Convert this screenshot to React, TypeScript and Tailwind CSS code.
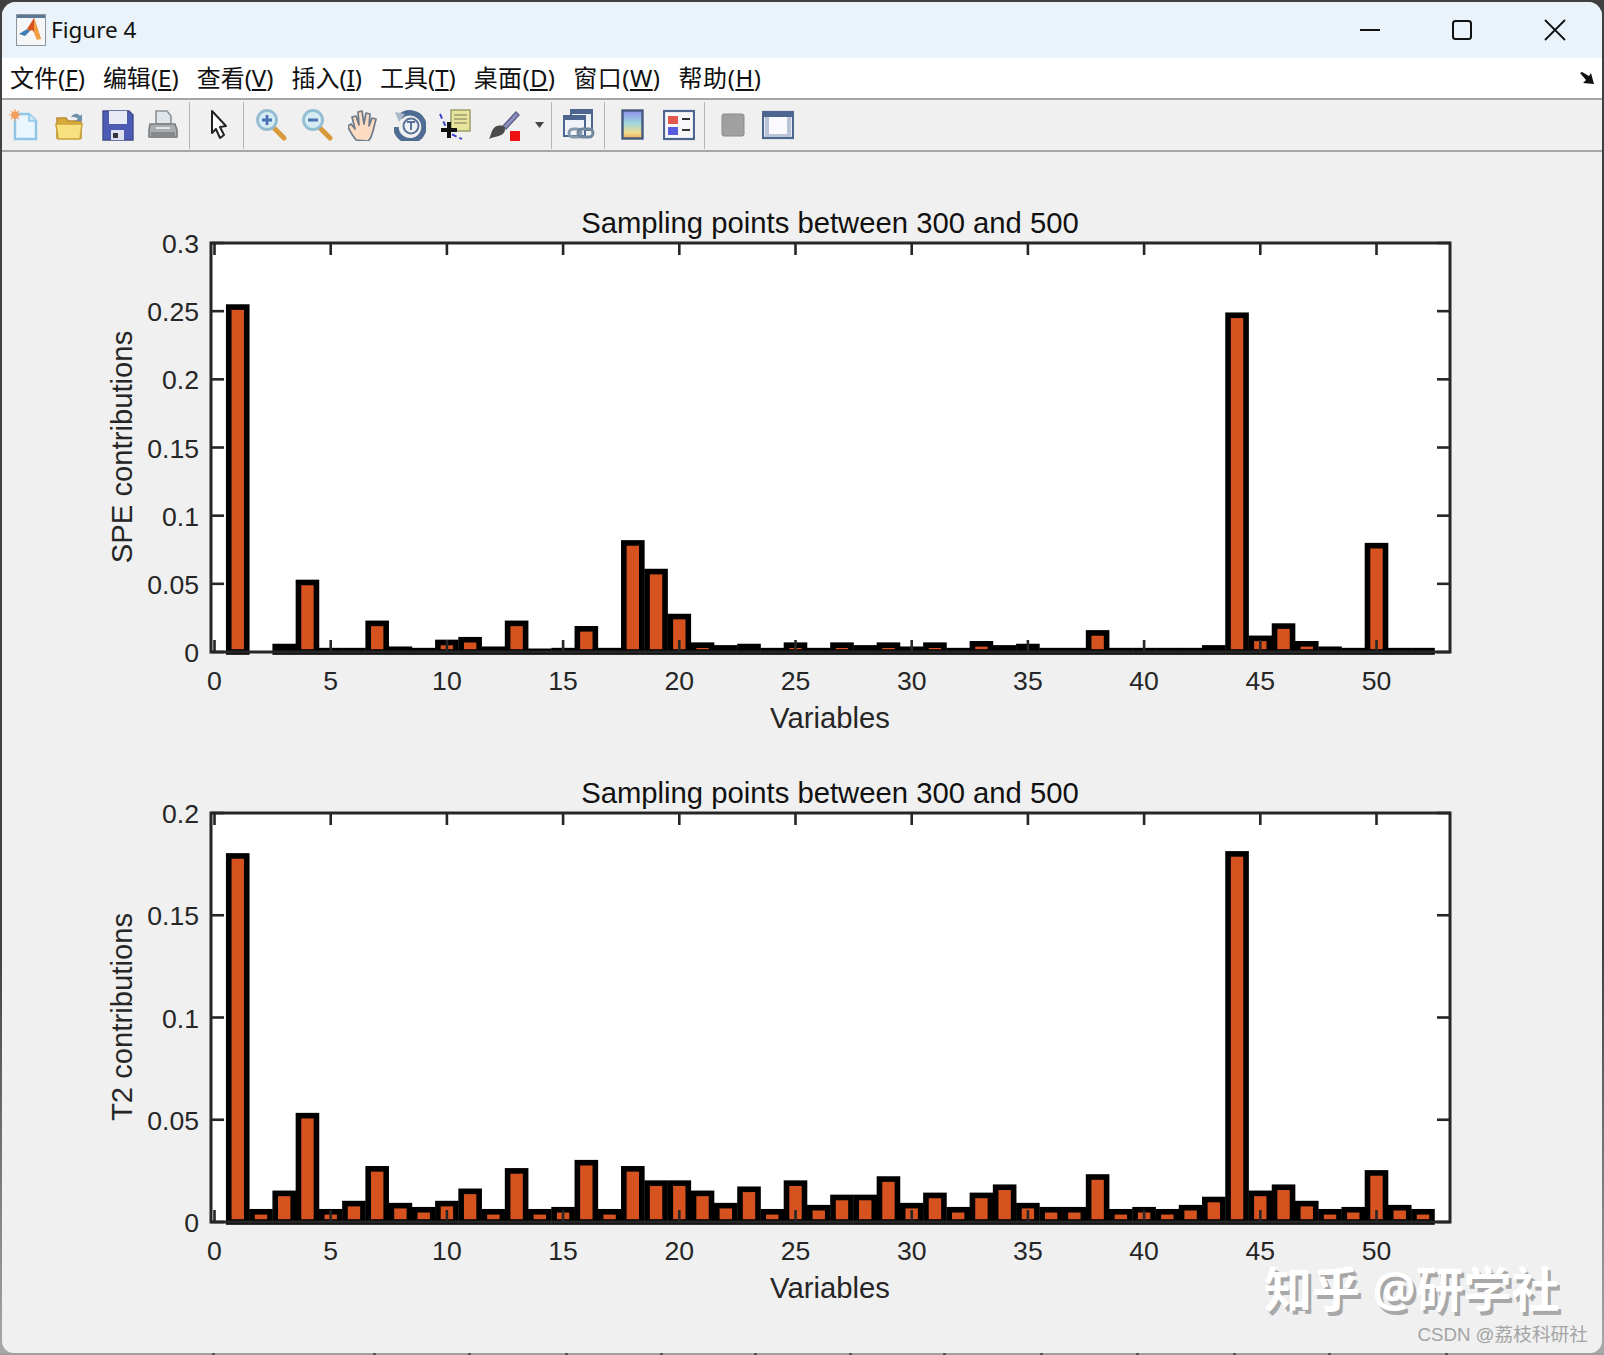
import React from 'react';

const MENUS = [
  { cn: '文件', key: 'F', extra: '' },
  { cn: '编辑', key: 'E', extra: '' },
  { cn: '查看', key: 'V', extra: '' },
  { cn: '插入', key: 'I', extra: '' },
  { cn: '工具', key: 'T', extra: '' },
  { cn: '桌面', key: 'D', extra: 'tracking-[0.3px]' },
  { cn: '窗口', key: 'W', extra: 'tracking-[0.5px]' },
  { cn: '帮助', key: 'H', extra: 'tracking-[0.6px]' },
];

const SPE = [
  0.253, 0, 0.004, 0.051, 0.001, 0.001, 0.021, 0.002, 0.001, 0.007, 0.009, 0.002, 0.021, 0.0005, 0.001, 0.017, 0.001, 0.08,
  0.059, 0.026, 0.005, 0.003, 0.004, 0.001, 0.005, 0.001, 0.005, 0.003, 0.005, 0.002, 0.005, 0.001, 0.006, 0.003, 0.004,
  0.001, 0.001, 0.014, 0.001, 0.001, 0.001, 0.001, 0.003, 0.247, 0.01, 0.019, 0.006, 0.002, 0.001, 0.078, 0.001, 0.001,
];

const T2 = [
  0.179, 0.005, 0.014, 0.052, 0.005, 0.009, 0.026, 0.008, 0.006, 0.009, 0.015, 0.005, 0.025, 0.005, 0.006, 0.029, 0.005,
  0.026, 0.019, 0.019, 0.014, 0.008, 0.016, 0.005, 0.019, 0.007, 0.012, 0.012, 0.021, 0.008, 0.013, 0.006, 0.013, 0.017,
  0.008, 0.006, 0.006, 0.022, 0.005, 0.006, 0.005, 0.007, 0.011, 0.18, 0.014, 0.017, 0.009, 0.005, 0.006, 0.024, 0.007,
  0.005,
];

const AX_LEFT = 209;
const AX_RIGHT = 1448;
const AX_TOP = 43;
const AX_BOTTOM = 452;
const X0 = 212.5;
const DX = 23.24;
const INK = '#262626';

// tops of the window stacked behind this one, showing under the bottom edge
const PEEK_MARKS = [212, 373, 468, 565, 660, 754, 849, 943, 1040, 1136, 1233, 1328, 1445];

function Plot({ data, yMax, yTicks, yLabel }: { data: number[]; yMax: number; yTicks: string[]; yLabel: string }) {
  const toY = (v: number) => AX_BOTTOM - (v / yMax) * (AX_BOTTOM - AX_TOP);
  const xTicks = [0, 5, 10, 15, 20, 25, 30, 35, 40, 45, 50];
  return (
    <svg width="1600" height="540" className="block shrink-0" fontFamily="'Liberation Sans', Arial, sans-serif">
      <rect x={AX_LEFT} y={AX_TOP} width={AX_RIGHT - AX_LEFT} height={AX_BOTTOM - AX_TOP} fill="#fff" />
      {data.map((v, i) => (
        <rect
          key={i}
          x={X0 + (i + 1) * DX - 9}
          y={toY(v)}
          width={18}
          height={AX_BOTTOM - toY(v)}
          fill="#d6531f"
          stroke="#000"
          strokeWidth={5.6}
        />
      ))}
      <rect x={AX_LEFT} y={AX_TOP} width={AX_RIGHT - AX_LEFT} height={AX_BOTTOM - AX_TOP} fill="none" stroke={INK} strokeWidth={3} />
      {xTicks.map((t) => {
        const x = X0 + t * DX;
        return (
          <g key={t}>
            <line x1={x} x2={x} y1={AX_TOP} y2={AX_TOP + 12} stroke={INK} strokeWidth={2.6} />
            <line x1={x} x2={x} y1={AX_BOTTOM} y2={AX_BOTTOM - 12} stroke={INK} strokeWidth={2.6} />
            <text x={x} y={490} fontSize={26.6} fill={INK} textAnchor="middle">
              {t}
            </text>
          </g>
        );
      })}
      {yTicks.map((t, i) => {
        const y = AX_BOTTOM - (i / (yTicks.length - 1)) * (AX_BOTTOM - AX_TOP);
        return (
          <g key={t}>
            <line x1={AX_LEFT} x2={AX_LEFT + 13} y1={y} y2={y} stroke={INK} strokeWidth={2.6} />
            <line x1={AX_RIGHT} x2={AX_RIGHT - 13} y1={y} y2={y} stroke={INK} strokeWidth={2.6} />
            <text x={197} y={y + 10} fontSize={26.6} fill={INK} textAnchor="end">
              {t}
            </text>
          </g>
        );
      })}
      <text x={828} y={33} fontSize={29.25} fill="#111" textAnchor="middle">
        Sampling points between 300 and 500
      </text>
      <text x={828} y={528} fontSize={29.25} fill={INK} textAnchor="middle">
        Variables
      </text>
      <text transform="translate(130 247) rotate(-90)" fontSize={29.25} fill={INK} textAnchor="middle">
        {yLabel}
      </text>
    </svg>
  );
}

function MatlabLogo() {
  return (
    <svg width="30" height="32" viewBox="0 0 30 32" className="shrink-0">
      <rect x="0.5" y="0.5" width="29" height="31" fill="#f4f6f8" stroke="#8b95a0" />
      <rect x="1" y="1" width="28" height="3" fill="#5d7894" />
      <path d="M3 20l8-5 3 2-5 5z" fill="#3f7fb5" />
      <path d="M11 15l7-11 7 21-5-5-4-4-2 1z" fill="#d9531e" />
      <path d="M18 4l7 21-4 1-3-7z" fill="#f0a040" />
    </svg>
  );
}

function Sep({ className }: { className: string }) {
  return <div className={`w-[1px] h-[47px] bg-[#b4b4b4] shrink-0 ${className}`} />;
}

function Icon({ children, className, w = 32 }: { children: React.ReactNode; className: string; w?: number }) {
  return (
    <svg width={w} height="32" viewBox={`0 0 ${w} 32`} className={`shrink-0 ${className}`}>
      {children}
    </svg>
  );
}

export default function App(): React.ReactElement {
  return (
    <div className="w-[1604px] h-[1355px] flex flex-col bg-[linear-gradient(to_bottom,#404040_0,#404040_70%,#a8a8a8_100%)] overflow-hidden">
      <div className="mt-[2px] mx-[2px] h-[1351px] shrink-0 bg-[#f0f0f0] rounded-t-[14px] rounded-b-[12px] overflow-hidden flex flex-col font-['Noto_Sans','Noto_Sans_CJK_SC',sans-serif]">
        {/* title bar */}
        <div className="h-[56px] bg-[#e9f3f9] flex items-center pl-[14px] shrink-0">
          <MatlabLogo />
          <span className="ml-[5px] text-[22.5px] text-[#111]">Figure 4</span>
          <div className="ml-auto flex items-center">
            <svg width="22" height="22" viewBox="0 0 22 22" className="mr-[70px]">
              <path d="M1 11h20" stroke="#111" strokeWidth="1.8" />
            </svg>
            <svg width="22" height="22" viewBox="0 0 22 22" className="mr-[71px]">
              <rect x="2" y="2" width="18" height="18" rx="2.5" fill="none" stroke="#111" strokeWidth="2" />
            </svg>
            <svg width="22" height="22" viewBox="0 0 22 22" className="mr-[36px]">
              <path d="M1 1l20 20M21 1L1 21" stroke="#111" strokeWidth="1.8" />
            </svg>
          </div>
        </div>

        {/* menu bar */}
        <div className="h-[42px] bg-white border-b-2 border-[#a6a6a6] flex items-center pl-[8px] gap-[18px] shrink-0">
          {MENUS.map((m) => (
            <span key={m.key} className={`text-[24px] leading-none text-[#111] whitespace-nowrap ${m.extra}`}>
              {m.cn}(<span className="underline underline-offset-2">{m.key}</span>)
            </span>
          ))}
          <svg width="16" height="14" viewBox="0 0 16 14" className="ml-auto mr-[7px]">
            <path d="M1 2l2-1 7 4 2-3 3 11-11-1 3-3z" fill="#111" />
          </svg>
        </div>

        {/* toolbar */}
        <div className="h-[52px] bg-[#f0f0f0] border-b-2 border-[#a6a6a6] flex items-center shrink-0">
          <Icon className="ml-[7px]">
            <path d="M6 5h14l7 7v18H6z" fill="#eaf6fd" stroke="#8fc6e6" strokeWidth="2.4" />
            <path d="M20 5v7h7" fill="#cfe8f7" stroke="#8fc6e6" strokeWidth="1.6" />
            <circle cx="6" cy="6" r="3.6" fill="#ef8a3c" />
            <path d="M6 0v12M0 6h12M2 2l8 8M10 2l-8 8" stroke="#f3a468" strokeWidth="1.2" />
          </Icon>
          <Icon className="ml-[13px]">
            <path d="M3 9h9l2 3h13v17H3z" fill="#d9a93a" stroke="#b98d2e" strokeWidth="1.5" />
            <path d="M2 15h26l-2 15H4z" fill="#f7e17e" stroke="#caa23c" strokeWidth="1.6" />
            <path d="M17 8c3-4 7-4 9-1l2-2v7h-7l3-2c-2-2-4-2-7-2z" fill="#6d93ac" />
          </Icon>
          <Icon className="ml-[16px]">
            <path d="M1 2h26l4 4v25H1z" fill="#4d5cb2" stroke="#3f4a8e" strokeWidth="1.4" />
            <rect x="7" y="2" width="18" height="13" fill="#e8eaf6" />
            <rect x="9" y="21" width="13" height="10" fill="#dfe2ee" />
            <rect x="11" y="24" width="5" height="5" fill="#33363f" />
          </Icon>
          <Icon className="ml-[13px]">
            <path d="M9 2h11l4 5v8H9z" fill="#dfe5e9" stroke="#8b9398" strokeWidth="1.6" />
            <path d="M3 15h25l2 6v7H2v-7z" fill="#a9adaf" stroke="#7a7e80" strokeWidth="1.6" />
            <path d="M4 23h24v6H4z" fill="#868a8c" />
            <path d="M9 19h14" stroke="#e6e6e6" strokeWidth="1.8" />
          </Icon>
          <Sep className="ml-[10px]" />
          <Icon className="ml-[20px]" w={20}>
            <path d="M2 2l14 15-6 1 4 8-4 3-4-9-4 4z" fill="#fff" stroke="#222" strokeWidth="2" strokeLinejoin="round" />
          </Icon>
          <Sep className="ml-[13px]" />
          <Icon className="ml-[11px]">
            <path d="M18 18l11 11" stroke="#d99a3c" strokeWidth="5" strokeLinecap="round" />
            <circle cx="12" cy="11" r="9.5" fill="#d6ecf4" stroke="#93bdd2" strokeWidth="2.8" />
            <path d="M12 6v10M7 11h10" stroke="#4a72b4" strokeWidth="2.8" />
          </Icon>
          <Icon className="ml-[14px]">
            <path d="M18 18l11 11" stroke="#d99a3c" strokeWidth="5" strokeLinecap="round" />
            <circle cx="12" cy="11" r="9.5" fill="#d6ecf4" stroke="#93bdd2" strokeWidth="2.8" />
            <path d="M7 11h10" stroke="#4a72b4" strokeWidth="2.8" />
          </Icon>
          <Icon className="ml-[15px]">
            <path
              d="M8 31C5 27 1 22 0 17l3-2 4 5-3-12 4-1 3 9-1-13 4-1 2 13 2-11 4 1-1 12 3-8 4 1-3 12-2 6c-1 2-2 3-3 4z"
              fill="#fbdcc2"
              stroke="#6d7a8a"
              strokeWidth="1.7"
              strokeLinejoin="round"
            />
          </Icon>
          <Icon className="ml-[14px]">
            <path d="M6 8a14 14 0 1 1-4 10" fill="none" stroke="#4f6c93" strokeWidth="5.5" />
            <path d="M1 3l10 2-6 8z" fill="#a9b8c8" />
            <circle cx="17" cy="17" r="7.5" fill="#eef2f6" stroke="#5a7497" strokeWidth="2" />
            <path d="M13 13h8M17 13v8" stroke="#5a7497" strokeWidth="2" />
          </Icon>
          <Icon className="ml-[13px]">
            <path d="M12 1h19v21H12z" fill="#e9e49c" stroke="#9aa06a" strokeWidth="1.5" />
            <path d="M15 6h13M15 10h13M15 14h13" stroke="#9a9a70" strokeWidth="1.6" />
            <path d="M1 5l5 11 6 9 11 5" fill="none" stroke="#3a3ec8" strokeWidth="1.9" strokeDasharray="5 3" />
            <path d="M10 13v16M2 21h16" stroke="#111" strokeWidth="4" />
          </Icon>
          <Icon className="ml-[17px]">
            <path d="M15 17L28 3l3 3-13 14z" fill="#8d90c0" stroke="#5e6188" strokeWidth="1.4" />
            <path d="M6 19c3-3 8-3 10-1s1 6-3 8-8 2-12 4c2-3 2-8 5-11z" fill="#4b4b4b" />
            <rect x="22" y="22" width="10" height="10" fill="#ee1111" />
          </Icon>
          <svg width="9" height="6" viewBox="0 0 9 6" className="ml-[15px] shrink-0">
            <path d="M0 0h9L4.5 6z" fill="#444" />
          </svg>
          <Sep className="ml-[7px]" />
          <Icon className="ml-[11px]">
            <path d="M8 1h21v20H8z" fill="#eef3f8" stroke="#4d6690" strokeWidth="2" />
            <rect x="8" y="1" width="21" height="4" fill="#4d6690" />
            <path d="M1 7h21v20H1z" fill="#f0f4f8" stroke="#4d6690" strokeWidth="2" />
            <rect x="1" y="7" width="21" height="4" fill="#4d6690" />
            <rect x="6" y="20" width="12" height="8" rx="4" fill="none" stroke="#8499ad" strokeWidth="3" />
            <rect x="15" y="20" width="15" height="8" rx="4" fill="none" stroke="#6f879f" strokeWidth="3" />
          </Icon>
          <Sep className="ml-[9px]" />
          <svg width="24" height="32" viewBox="0 0 24 32" className="ml-[16px] shrink-0">
            <defs>
              <linearGradient id="cb" x1="0" y1="0" x2="0" y2="1">
                <stop offset="0" stopColor="#8f8fe8" />
                <stop offset="0.45" stopColor="#9fd8e0" />
                <stop offset="0.8" stopColor="#f0dc8c" />
                <stop offset="1" stopColor="#f0a860" />
              </linearGradient>
            </defs>
            <rect x="1.5" y="1.5" width="20" height="28" fill="url(#cb)" stroke="#45597e" strokeWidth="2.4" />
          </svg>
          <Icon className="ml-[18px]">
            <rect x="1" y="2" width="30" height="28" fill="#f8f8fa" stroke="#4d6690" strokeWidth="2.2" />
            <rect x="5" y="7" width="10" height="8" fill="#e2574c" />
            <rect x="5" y="18" width="10" height="8" fill="#5a5ce0" />
            <path d="M19 10h8M19 21h8" stroke="#333" strokeWidth="2.2" />
          </Icon>
          <Sep className="ml-[9px]" />
          <svg width="24" height="24" viewBox="0 0 24 24" className="ml-[16px] shrink-0">
            <rect x="1" y="1" width="22" height="22" rx="2" fill="#a0a0a0" stroke="#8a8a8a" />
          </svg>
          <Icon className="ml-[17px]">
            <rect x="1" y="3" width="30" height="26" fill="#fbfbff" stroke="#4d6690" strokeWidth="2.2" />
            <rect x="1" y="3" width="30" height="5" fill="#4d6690" />
            <path d="M3 8v19h4V8zM25 8v19h4V8z" fill="#b9c4d6" />
            <rect x="3" y="25" width="26" height="3" fill="#b9c4d6" />
          </Icon>
        </div>

        {/* figure canvas */}
        <div className="flex flex-col gap-[30px] pt-[48px] relative flex-1">
          <Plot data={SPE} yMax={0.3} yTicks={['0', '0.05', '0.1', '0.15', '0.2', '0.25', '0.3']} yLabel="SPE contributions" />
          <Plot data={T2} yMax={0.2} yTicks={['0', '0.05', '0.1', '0.15', '0.2']} yLabel="T2 contributions" />
          <div className="absolute left-[1262px] top-[1113px] text-[48px] leading-none font-bold whitespace-nowrap text-white [text-shadow:3px_4px_0_#a8a8a8]">
            知乎 @研学社
          </div>
          <div className="absolute right-[14px] top-[1174px] text-[18.7px] leading-none whitespace-nowrap text-[#a4a4a4] font-['Liberation_Sans','Noto_Sans_CJK_SC',sans-serif]">
            CSDN @荔枝科研社
          </div>
        </div>
      </div>
      <svg width="1604" height="2" className="block shrink-0">
        <rect width="1604" height="2" fill="#a0a0a0" />
        {PEEK_MARKS.map((x) => (
          <rect key={x} x={x} y="0" width="3" height="2" fill="#555" />
        ))}
      </svg>
    </div>
  );
}
